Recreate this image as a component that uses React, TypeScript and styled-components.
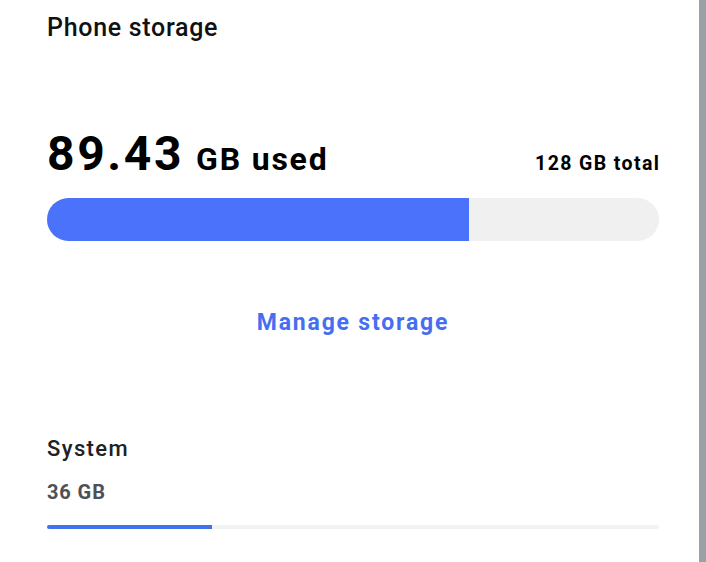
import React from "react";
import styled, { createGlobalStyle } from "styled-components";

const Global = createGlobalStyle`
  html, body { margin: 0; padding: 0; background: #ffffff; }
  body { font-family: Roboto, "Noto Sans", sans-serif; overflow: hidden; }
`;

const Screen = styled.div`
  width: 706px;
  height: 562px;
  display: flex;
  background: #ffffff;
  overflow: hidden;
`;

const Content = styled.main`
  flex: 1;
  padding: 12px 40px 0 47px;
  display: flex;
  flex-direction: column;
`;

const EdgeBar = styled.div`
  width: 7px;
  background: #9aa0a6;
`;

const Title = styled.h1`
  margin: 0;
  font-size: 25px;
  line-height: 32px;
  letter-spacing: 0.7px;
  font-weight: 500;
  color: #111111;
`;

const UsageRow = styled.div`
  margin-top: 84px;
  display: flex;
  justify-content: space-between;
  align-items: baseline;
`;

const Used = styled.div`
  display: flex;
  align-items: baseline;
  gap: 12px;
  color: #000000;
`;

const BigNumber = styled.span`
  font-size: 48px;
  line-height: 52px;
  letter-spacing: 2.6px;
  font-weight: 700;
`;

const Unit = styled.span`
  font-size: 32px;
  letter-spacing: 1.8px;
  font-weight: 700;
`;

const Total = styled.span`
  font-size: 19.5px;
  letter-spacing: 1.4px;
  margin-right: -1.4px;
  font-weight: 700;
  color: #000000;
`;

const Track = styled.div<{ $h: number; $bg: string }>`
  height: ${(p) => p.$h}px;
  border-radius: ${(p) => p.$h / 2}px;
  background: ${(p) => p.$bg};
  overflow: hidden;
`;

const Fill = styled.div<{ $color: string }>`
  height: 100%;
  background: ${(p) => p.$color};
`;

const BigBar = styled.div`
  margin-top: 18px;
`;

const ManageButton = styled.button`
  align-self: center;
  margin-top: 67px;
  border: none;
  background: none;
  padding: 0;
  font-family: inherit;
  font-size: 23px;
  line-height: 30px;
  letter-spacing: 1.8px;
  font-weight: 700;
  color: #456ff0;
  cursor: pointer;
`;

const Category = styled.section`
  margin-top: 97px;
  display: flex;
  flex-direction: column;
`;

const CatName = styled.div`
  font-size: 22px;
  line-height: 28px;
  letter-spacing: 1.4px;
  font-weight: 500;
  color: #202124;
`;

const CatSize = styled.div`
  margin-top: 17px;
  font-size: 20px;
  line-height: 24px;
  letter-spacing: 0.9px;
  font-weight: 700;
  color: #4d5156;
`;

const SmallBar = styled.div`
  margin-top: 21px;
`;

export default function App() {
  const used = 89.43;
  const total = 128;
  const system = 36;
  return (
    <Screen>
      <Global />
      <Content>
        <Title>Phone storage</Title>
        <UsageRow>
          <Used>
            <BigNumber>{used}</BigNumber>
            <Unit>GB used</Unit>
          </Used>
          <Total>{total} GB total</Total>
        </UsageRow>
        <BigBar>
          <Track $h={43} $bg="#f0f0f0">
            <Fill $color="#4a72fb" style={{ width: `${(422 / 612) * 100}%` }} />
          </Track>
        </BigBar>
        <ManageButton>Manage storage</ManageButton>
        <Category>
          <CatName>System</CatName>
          <CatSize>{system} GB</CatSize>
          <SmallBar>
            <Track $h={4} $bg="#f1f2f4">
              <Fill $color="#4470ee" style={{ width: `${(165 / 612) * 100}%` }} />
            </Track>
          </SmallBar>
        </Category>
      </Content>
      <EdgeBar />
    </Screen>
  );
}
